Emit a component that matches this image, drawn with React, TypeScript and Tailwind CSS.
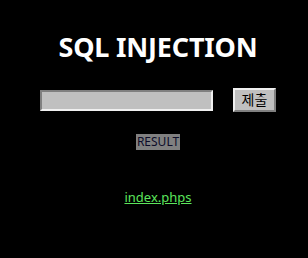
export default function App() {
  return (
    <div className="w-[308px] h-[258px] bg-black flex flex-col items-center pl-[8px] font-['Noto_Sans','Noto_Sans_CJK_KR',sans-serif]">
      <h1 className="mt-[28px] text-white font-bold text-[27px] leading-[38px] tracking-[-0.2px]">
        SQL INJECTION
      </h1>

      <form className="mt-[22px] flex items-center gap-[20px]" onSubmit={(e) => e.preventDefault()}>
        <input
          type="text"
          className="w-[173px] h-[21px] bg-[#c0c0c0] border-2 border-t-[#808080] border-l-[#808080] border-b-[#f0f0f0] border-r-[#f0f0f0] outline-none"
        />
        <button
          type="submit"
          className="w-[43px] h-[24px] bg-[#c0c0c0] border-2 border-t-[#f0f0f0] border-l-[#f0f0f0] border-b-[#808080] border-r-[#808080] text-black text-[14px] leading-none"
        >
          제출
        </button>
      </form>

      <div className="mt-[22px] bg-[#808080] text-[#0c0c28] text-[12px] leading-[16px] px-[1px]">
        RESULT
      </div>

      <a href="#" className="mt-[39px] text-[#5ce65c] underline text-[13px] leading-[16px]">
        index.phps
      </a>
    </div>
  );
}
